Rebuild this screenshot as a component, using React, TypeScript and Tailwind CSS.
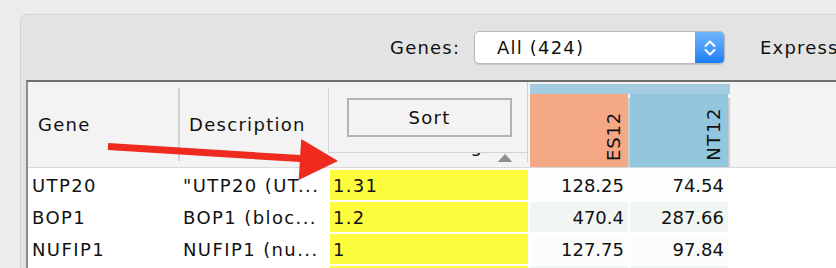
import React from "react";

const rows = [
  { gene: "UTP20", desc: "\"UTP20 (UT...", score: "1.31", es: "128.25", nt: "74.54", bg: "bg-[#fcfdfc]" },
  { gene: "BOP1", desc: "BOP1 (bloc...", score: "1.2", es: "470.4", nt: "287.66", bg: "bg-[#f2f6f3]" },
  { gene: "NUFIP1", desc: "NUFIP1 (nu...", score: "1", es: "127.75", nt: "97.84", bg: "bg-[#fbfcfb]" },
  { gene: "RRP12", desc: "RRP12 (rib...", score: "0.98", es: "210.5", nt: "150.1", bg: "bg-[#f2f6f3]" },
];

export default function App() {
  return (
    <div className="relative w-[836px] h-[268px] overflow-hidden bg-[#ececec] text-[#111] font-['DejaVu_Sans',sans-serif]">
      <div className="ml-[20px] mt-[14px] h-[254px] bg-[#e3e3e3] border-t border-l border-[#d3d3d3] rounded-tl-[7px] flex flex-col overflow-hidden">
        {/* toolbar */}
        <div className="h-[65px] shrink-0 flex items-center pl-[369px] whitespace-nowrap">
          <div className="w-[84px] shrink-0 text-[18px] tracking-[1.2px]">Genes:</div>
          <div className="w-[251px] h-[33px] shrink-0 rounded-[5px] border border-[#b8b8b8] bg-white shadow-[0_1px_1px_rgba(0,0,0,0.12)] flex overflow-hidden">
            <div className="flex-1 pl-[22px] flex items-center text-[18px] tracking-[1.2px]">All (424)</div>
            <div className="w-[29px] bg-linear-to-b from-[#6fb6fb] to-[#187ffa] flex items-center justify-center">
              <svg width="14" height="20" viewBox="0 0 14 20">
                <path d="M2.5 8 L7 3.5 L11.5 8" fill="none" stroke="white" strokeWidth="2" strokeLinecap="round" strokeLinejoin="round" />
                <path d="M2.5 12 L7 16.5 L11.5 12" fill="none" stroke="white" strokeWidth="2" strokeLinecap="round" strokeLinejoin="round" />
              </svg>
            </div>
          </div>
          <div className="ml-[35px] shrink-0 text-[18px] tracking-[1.2px]">Expression:</div>
        </div>

        {/* table */}
        <div className="ml-[5px] shrink-0 h-[300px] border-t-2 border-l-2 border-t-[#6e6e6e] border-l-[#8c8c8c] bg-white flex flex-col">
          {/* header */}
          <div className="h-[86px] shrink-0 bg-[#f3f3f3] border-b border-[#d9d9d9] flex">
            <div className="w-[150px] pl-[10px] flex items-center text-[18px] tracking-[1.3px]">Gene</div>
            <div className="w-[2px] my-[6px] bg-[#d4d4d4]" />
            <div className="w-[148px] pl-[9px] flex items-center text-[18px] tracking-[1.3px]">Description</div>
            <div className="w-[200px] flex flex-col border-r border-[#cfcfcf] mb-[5px]">
              <div className="mt-[6px] h-[65px] shrink-0 border-l border-b border-[#d3d3d3] pt-[10px] pl-[18px]">
                <div className="w-[165px] h-[39px] border-2 border-[#b3b3b3] bg-[#f3f3f3] flex items-center justify-center text-[18px] tracking-[1.3px]">
                  Sort
                </div>
              </div>
              <div className="relative flex-1 overflow-hidden">
                <div className="-mt-[18px] pl-[14px] leading-[22px] text-[18px] tracking-[1.3px] whitespace-nowrap">Score ranking</div>
                <svg className="absolute right-[13px] top-[1px]" width="18" height="10" viewBox="0 0 18 10">
                  <polygon points="9,0 18,10 0,10" fill="#8e8e8e" />
                </svg>
              </div>
            </div>
            <div className="ml-[2px] mt-[2px] w-[200px] flex flex-col">
              <div className="h-[10px] shrink-0 bg-[#a4cde1]" />
              <div className="flex-1 flex">
                <div className="w-[98px] bg-[#f4a886] flex justify-end items-end pr-[5px] pb-[6px]">
                  <span className="[writing-mode:vertical-rl] rotate-180 text-[18px] leading-[18px] tracking-[0.8px]">ES12</span>
                </div>
                <div className="w-[2px] mt-[4px] bg-[#cdcdcd]" />
                <div className="w-[98px] bg-[#92c5de] flex justify-end items-end pr-[5px] pb-[6px]">
                  <span className="[writing-mode:vertical-rl] rotate-180 text-[18px] leading-[18px] tracking-[1.6px]">NT12</span>
                </div>
                <div className="w-[2px] mt-[4px] bg-[#cdcdcd]" />
              </div>
            </div>
          </div>

          {/* body */}
          <div className="pt-[2px] flex flex-col gap-[2px]">
            {rows.map((r) => (
              <div key={r.gene} className="h-[30px] shrink-0 flex text-[18px] whitespace-nowrap">
                <div className="w-[150px] pl-[4px] flex items-center tracking-[1.4px]">{r.gene}</div>
                <div className="w-[152px] pl-[5px] flex items-center tracking-[1.4px] overflow-hidden">{r.desc}</div>
                <div className="w-[198px] pl-[3px] bg-[#fdfd3e] flex items-center tracking-[1.3px]">{r.score}</div>
                <div className={`ml-[2px] w-[98px] pr-[4px] flex items-center justify-end ${r.bg}`}>{r.es}</div>
                <div className={`ml-[2px] w-[98px] pr-[4px] flex items-center justify-end ${r.bg}`}>{r.nt}</div>
              </div>
            ))}
          </div>
        </div>
      </div>

      {/* red arrow overlay */}
      <svg className="absolute left-0 top-0 pointer-events-none" width="836" height="268" viewBox="0 0 836 268">
        <polygon
          points="108.2,143 300.2,155.1 301.3,139 338,161 298.7,180 299.8,162.1 107.8,150"
          fill="#ef2b20"
        />
      </svg>
    </div>
  );
}
